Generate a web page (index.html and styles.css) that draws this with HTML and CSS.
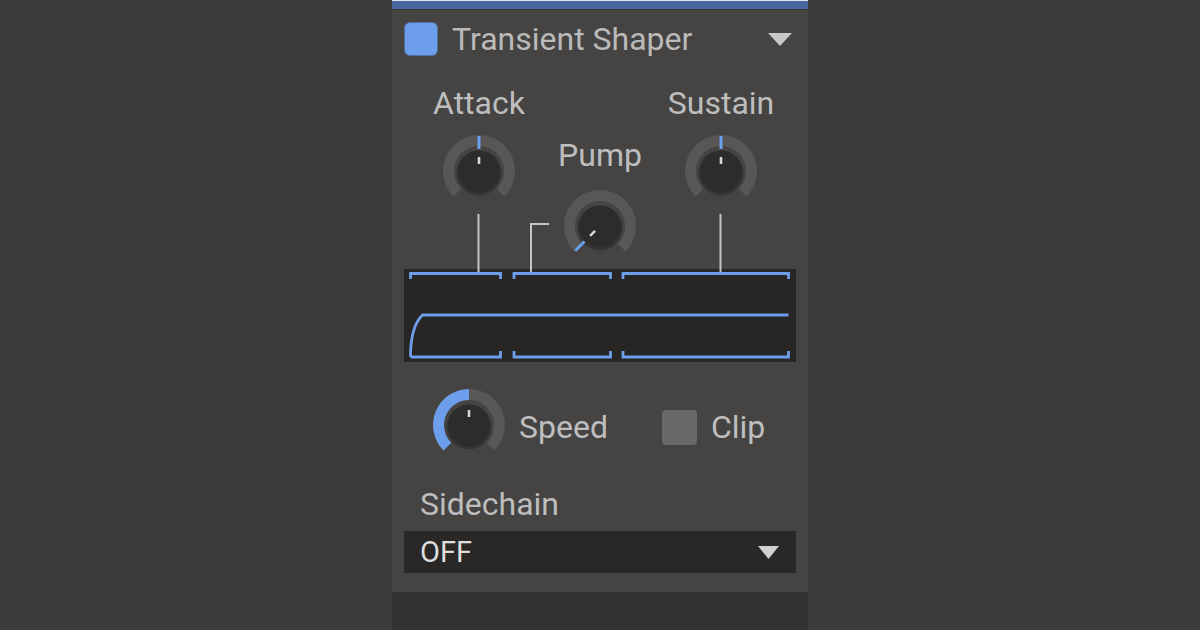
FILE: index.html
```html
<!DOCTYPE html>
<html>
<head>
<meta charset="utf-8">
<title>Transient Shaper</title>
<link rel="stylesheet" href="styles.css">
</head>
<body>
<div class="panel">
  <div class="topline"></div>
  <div class="titlebar"></div>
  <div class="titlesep"></div>
  <header class="header">
    <span class="enable"></span>
    <span class="title">Transient Shaper</span>
    <svg class="menu-arrow" width="24" height="13" viewBox="0 0 24 13"><path d="M0 0H24L12 13Z"/></svg>
  </header>

  <div class="content">
    <section class="knobs">
      <div class="kcol">
        <div class="label">Attack</div>
        <svg class="knob" width="76" height="76" viewBox="0 0 76 76">
          <path class="ring" d="M16.43 59.57A30.5 30.5 0 1 1 59.57 59.57"/>
          <circle class="shadow" cx="38" cy="40" r="22.5"/>
          <circle class="body" cx="38" cy="38.5" r="21"/>
          <line class="ptr-blue" x1="38" y1="3" x2="38" y2="16"/>
          <line class="ptr" x1="38" y1="24" x2="38" y2="31"/>
        </svg>
        <svg class="wire" width="150" height="60" viewBox="0 0 150 60">
          <path d="M74.5 5V60"/>
          <path d="M127 60V15H145"/>
        </svg>
      </div>
      <div class="kcol kcol-mid">
        <div class="label">Pump</div>
        <svg class="knob" width="76" height="76" viewBox="0 0 76 76">
          <path class="ring" d="M16.43 59.57A30.5 30.5 0 1 1 59.57 59.57"/>
          <circle class="shadow" cx="38" cy="40" r="22.5"/>
          <circle class="body" cx="38" cy="38.5" r="21"/>
          <line class="ptr-blue" x1="13.25" y1="62.75" x2="22.44" y2="53.56"/>
          <line class="ptr" x1="28.1" y1="47.9" x2="33.05" y2="42.95"/>
        </svg>
      </div>
      <div class="kcol">
        <div class="label">Sustain</div>
        <svg class="knob" width="76" height="76" viewBox="0 0 76 76">
          <path class="ring" d="M16.43 59.57A30.5 30.5 0 1 1 59.57 59.57"/>
          <circle class="shadow" cx="38" cy="40" r="22.5"/>
          <circle class="body" cx="38" cy="38.5" r="21"/>
          <line class="ptr-blue" x1="38" y1="3" x2="38" y2="16"/>
          <line class="ptr" x1="38" y1="24" x2="38" y2="31"/>
        </svg>
        <svg class="wire" width="150" height="60" viewBox="0 0 150 60">
          <path d="M74.5 5V60"/>
        </svg>
      </div>
    </section>

    <div class="display">
      <svg width="392" height="93" viewBox="0 0 392 93">
        <g class="stub">
          <path d="M74.5 0V4.5"/>
          <path d="M127 0V4.5"/>
          <path d="M316.5 0V4.5"/>
        </g>
        <g class="env">
          <path d="M6.5 10V4.5H96.5V10"/>
          <path d="M110 10V4.5H206.5V10"/>
          <path d="M219 10V4.5H384.5V10"/>
          <path d="M6.5 88H96.5V82"/>
          <path d="M110 82V88H206.5V82"/>
          <path d="M219 82V88H384.5V82"/>
          <path d="M6.5 88C6.5 70 9 55 18.5 46H384.5"/>
        </g>
      </svg>
    </div>

    <div class="row">
      <div class="speed">
        <svg class="knob" width="76" height="76" viewBox="0 0 76 76">
          <path class="ring" d="M38 7.5A30.5 30.5 0 0 1 59.57 59.57"/>
          <path class="ring-blue" d="M16.43 59.57A30.5 30.5 0 0 1 38 7.5"/>
          <circle class="shadow" cx="38" cy="40" r="22.5"/>
          <circle class="body" cx="38" cy="38.5" r="21"/>
          <line class="ptr" x1="38" y1="23" x2="38" y2="30"/>
        </svg>
        <span class="label speed-label">Speed</span>
      </div>
      <div class="clip">
        <span class="check"></span>
        <span class="label clip-label">Clip</span>
      </div>
    </div>

    <div class="label side">Sidechain</div>
    <div class="dropdown">
      <span class="value">OFF</span>
      <svg class="dd-arrow" width="21" height="13" viewBox="0 0 21 13"><path d="M0 0H21L10.5 13Z"/></svg>
    </div>
  </div>

  <div class="footer"></div>
</div>
</body>
</html>
```

FILE: styles.css
```css
html, body {
  margin: 0;
  padding: 0;
}

body {
  background: #3d3c3b;
  width: 1200px;
  height: 630px;
  overflow: hidden;
  font-family: Roboto, "Liberation Sans", sans-serif;
  display: flex;
  justify-content: center;
}

.panel {
  width: 416px;
  height: 630px;
  background: #454443;
  display: flex;
  flex-direction: column;
}

.topline {
  height: 1px;
  background: #e2e2ec;
}

.titlebar {
  height: 8px;
  background: #48689f;
}

.titlesep {
  height: 1px;
  background: #363534;
}

.header {
  height: 58px;
  display: flex;
  align-items: center;
  padding: 0 16px 0 12px;
}

.enable {
  width: 32px;
  height: 32px;
  border: 1px solid #4f6f9f;
  border-radius: 6px;
  background: #6d9eeb;
}

.title {
  margin-left: 14px;
  font-size: 32px;
  line-height: 32px;
  color: #bababa;
}

.menu-arrow {
  margin-left: auto;
  fill: #c8c8c8;
}

.content {
  padding: 0 12px;
  display: flex;
  flex-direction: column;
}

.label {
  font-size: 32px;
  line-height: 32px;
  color: #bebebe;
  white-space: nowrap;
}

.knobs {
  margin-top: 19px;
  display: grid;
  grid-template-columns: 150px 92px 150px;
  align-items: end;
}

.kcol {
  display: flex;
  flex-direction: column;
  align-items: center;
}

.kcol .knob {
  margin-top: 14px;
}

.kcol-mid .knob {
  margin-top: 17px;
  margin-bottom: 5px;
}

.knob {
  display: block;
}

.knob .ring {
  fill: none;
  stroke: #585756;
  stroke-width: 11;
}

.knob .ring-blue {
  fill: none;
  stroke: #6d9eeb;
  stroke-width: 11;
}

.knob .shadow {
  fill: rgba(0, 0, 0, 0.22);
}

.knob .body {
  fill: #2d2c2b;
}

.knob .ptr-blue {
  stroke: #6d9eeb;
  stroke-width: 3;
}

.knob .ptr {
  stroke: #d6d6d6;
  stroke-width: 2.6;
}

.wire {
  display: block;
}

.wire path {
  fill: none;
  stroke: #c4c4c4;
  stroke-width: 2;
}

.display {
  height: 93px;
  background: #272625;
}

.display svg {
  display: block;
}

.display .stub path {
  fill: none;
  stroke: #c4c4c4;
  stroke-width: 2;
}

.display .env path {
  fill: none;
  stroke: #6d9eeb;
  stroke-width: 2.8;
}

.row {
  margin-top: 25px;
  height: 76px;
  display: flex;
  align-items: center;
  padding-left: 27px;
}

.speed {
  display: flex;
  align-items: center;
}

.speed-label {
  margin-left: 12px;
  margin-top: 3px;
}

.clip {
  margin-left: 54px;
  display: flex;
  align-items: center;
  margin-top: 4px;
}

.check {
  width: 35px;
  height: 35px;
  border-radius: 4px;
  background: #6a6968;
}

.clip-label {
  margin-left: 14px;
}

.side {
  margin-top: 25px;
  padding-left: 16px;
}

.dropdown {
  margin-top: 11px;
  height: 42px;
  background: #292827;
  display: flex;
  align-items: center;
  padding: 0 17px 0 16px;
}

.value {
  font-size: 29px;
  line-height: 32px;
  color: #dedede;
}

.dd-arrow {
  margin-left: auto;
  fill: #d0d0d0;
}

.footer {
  margin-top: 19px;
  flex: 1;
  background: #333231;
}
```
